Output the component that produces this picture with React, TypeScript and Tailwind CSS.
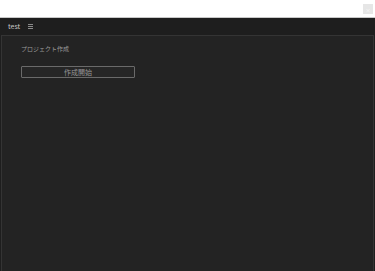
import React from "react";

export default function App() {
  return (
    <div
      className="w-[375px] h-[271px] flex flex-col bg-white overflow-hidden"
      style={{ fontFamily: '"Noto Sans CJK JP", "Noto Sans", sans-serif' }}
    >
      <div className="h-[17px] flex items-start justify-end pt-[4px] pr-[2px]">
        <div className="w-[10px] h-[10px] bg-[#e6e6e6] flex items-center justify-center text-[5px] leading-none text-white">
          ×
        </div>
      </div>
      <div className="h-[1px] bg-[#c8c8c8]" />
      <div className="flex-1 flex flex-col bg-[#1e1e1e]">
        <div className="h-[17px] flex items-center gap-[8px] pl-[8px]">
          <span className="text-[7px] leading-none text-[#c8c8c8]">test</span>
          <div className="flex flex-col gap-[1px]">
            <div className="w-[5px] h-[1px] bg-[#8a8a8a]" />
            <div className="w-[5px] h-[1px] bg-[#8a8a8a]" />
            <div className="w-[5px] h-[1px] bg-[#8a8a8a]" />
          </div>
        </div>
        <div className="flex-1 mx-[1px] border border-b-0 border-[#343434] bg-[#232323] px-[19px] pt-[8px]">
          <div className="text-[6px] leading-[10px] text-[#9a9a9a]">プロジェクト作成</div>
          <button className="mt-[12px] w-[114px] h-[12px] border border-[#6a6a6a] rounded-[1px] bg-[#262626] flex items-center justify-center text-[7px] leading-none text-[#969696]">
            作成開始
          </button>
        </div>
      </div>
    </div>
  );
}
